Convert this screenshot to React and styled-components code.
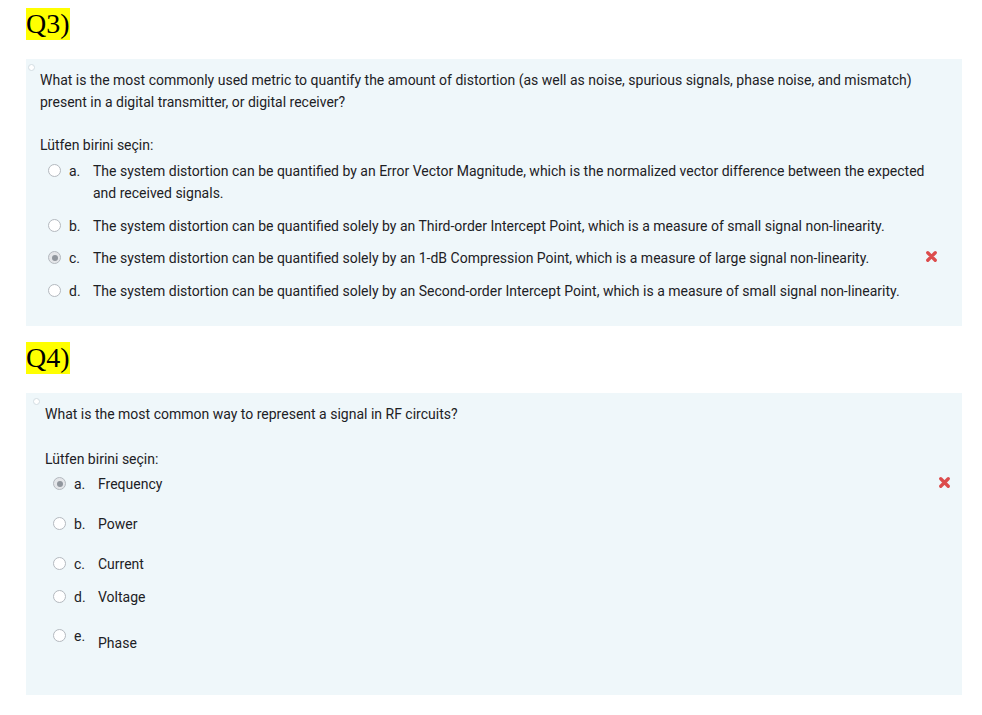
import styled, { createGlobalStyle } from "styled-components";

const questions = [
  {
    id: "Q3)",
    inset: 14,
    padRight: 25,
    bottom: 24,
    dotLeft: 5,
    lead: 21,
    text:
      "What is the most commonly used metric to quantify the amount of distortion (as well as noise, spurious signals, phase noise, and mismatch) present in a digital transmitter, or digital receiver?",
    answers: [
      {
        letter: "a.",
        space: 4,
        label:
          "The system distortion can be quantified by an Error Vector Magnitude, which is the normalized vector difference between the expected and received signals.",
      },
      {
        letter: "b.",
        space: 11,
        label:
          "The system distortion can be quantified solely by an Third-order Intercept Point, which is a measure of small signal non-linearity.",
      },
      {
        letter: "c.",
        space: 10,
        checked: true,
        wrong: true,
        label:
          "The system distortion can be quantified solely by an 1-dB Compression Point, which is a measure of large signal non-linearity.",
      },
      {
        letter: "d.",
        space: 11,
        label:
          "The system distortion can be quantified solely by an Second-order Intercept Point, which is a measure of small signal non-linearity.",
      },
    ],
  },
  {
    id: "Q4)",
    inset: 19,
    padRight: 12,
    bottom: 41,
    dotLeft: 10,
    lead: 23,
    text: "What is the most common way to represent a signal in RF circuits?",
    answers: [
      { letter: "a.", space: 3, checked: true, wrong: true, label: "Frequency" },
      { letter: "b.", space: 18, label: "Power" },
      { letter: "c.", space: 18, label: "Current" },
      { letter: "d.", space: 11, label: "Voltage" },
      { letter: "e.", space: 17, drop: 7, label: "Phase" },
    ],
  },
];

const App = () => (
  <>
    <GlobalStyle />
    <Page>
      {questions.map((q) => (
        <Block key={q.id}>
          <Heading>
            <Mark>{q.id}</Mark>
          </Heading>
          <Panel $inset={q.inset} $padRight={q.padRight} $bottom={q.bottom}>
            <Flag $left={q.dotLeft} />
            <Prompt>{q.text}</Prompt>
            <Hint $lead={q.lead}>Lütfen birini seçin:</Hint>
            {q.answers.map((a) => (
              <Answer key={a.letter} $space={a.space}>
                <Radio $checked={a.checked} />
                <Letter>{a.letter}</Letter>
                <Label $drop={a.drop}>{a.label}</Label>
                {a.wrong && <WrongIcon />}
              </Answer>
            ))}
          </Panel>
        </Block>
      ))}
    </Page>
  </>
);

const WrongIcon = () => (
  <Cross viewBox="0 0 10 10">
    <path d="M1.6 1.6 L8.4 8.4 M8.4 1.6 L1.6 8.4" />
  </Cross>
);

const GlobalStyle = createGlobalStyle`
  body {
    margin: 0;
    background: #fff;
    font-family: Roboto, "Liberation Sans", sans-serif;
    color: #1d2125;
  }
`;

const Page = styled.div`
  width: 936px;
  padding: 8px 0 0 26px;
`;

const Block = styled.section`
  & + & {
    margin-top: 16px;
  }
`;

const Heading = styled.div`
  height: 32px;
  margin-bottom: 19px;
`;

const Mark = styled.span`
  display: inline-block;
  background: #ffff00;
  color: #000;
  font-family: "Liberation Serif", "Times New Roman", serif;
  font-size: 28px;
  line-height: 32px;
  height: 32px;
`;

const Panel = styled.div`
  position: relative;
  background: #eff7fa;
  padding: 10px ${(p) => p.$padRight}px ${(p) => p.$bottom}px ${(p) => p.$inset}px;
  font-size: 14px;
  line-height: 22px;
`;

const Flag = styled.span`
  position: absolute;
  top: 5px;
  left: ${(p) => p.$left - 3}px;
  box-sizing: border-box;
  width: 7px;
  height: 7px;
  border-radius: 50%;
  background: #fff;
  border: 1.5px solid #d3dde2;
`;

const Prompt = styled.div``;

const Hint = styled.div`
  margin-top: ${(p) => p.$lead}px;
`;

const Answer = styled.div`
  display: flex;
  align-items: flex-start;
  margin-top: ${(p) => p.$space}px;
  padding-left: 8px;
`;

const Radio = styled.span`
  flex: none;
  box-sizing: border-box;
  width: 13px;
  height: 13px;
  margin-top: 4px;
  border-radius: 50%;
  border: 1px solid #b4b9bf;
  background: ${(p) => (p.$checked ? "#e4e6e9" : "#fff")};
  display: flex;
  align-items: center;
  justify-content: center;

  &::after {
    content: "";
    display: ${(p) => (p.$checked ? "block" : "none")};
    width: 6px;
    height: 6px;
    border-radius: 50%;
    background: #90969d;
  }
`;

const Letter = styled.span`
  flex: none;
  width: 24px;
  margin-left: 8px;
`;

const Label = styled.span`
  flex: 1;
  padding-top: ${(p) => p.$drop || 0}px;
`;

const Cross = styled.svg`
  flex: none;
  width: 11px;
  height: 11px;
  margin-top: 4px;
  margin-left: 6px;
  stroke: #dc4c4c;
  stroke-width: 3;
  stroke-linecap: round;
  fill: none;
`;

export default App;
